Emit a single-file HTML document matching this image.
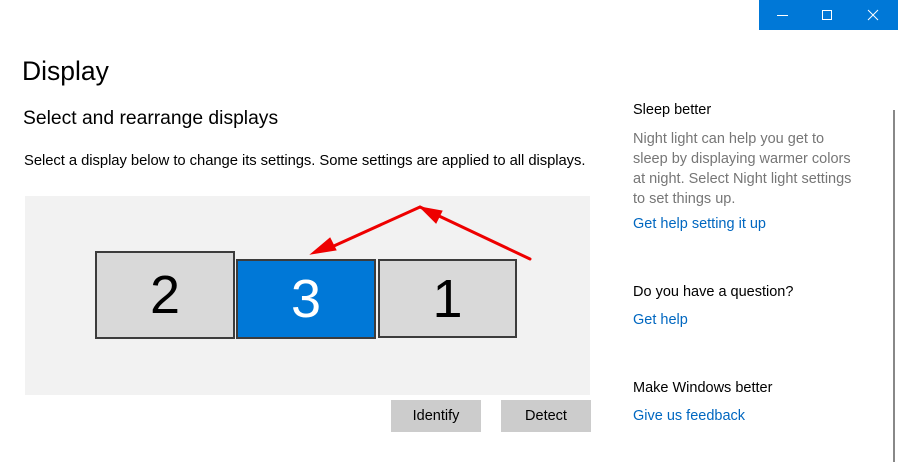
<!DOCTYPE html>
<html><head><meta charset="utf-8"><style>
body{margin:0;width:898px;height:462px;background:#fff;position:relative;overflow:hidden;font-family:"Liberation Sans",sans-serif;color:#000}
.a{position:absolute}
.tb{left:759px;top:0;width:139px;height:30px;background:#0078d7}
.mon{position:absolute;box-sizing:border-box;border:2px solid #3c3c3c;background:#d9d9d9;font-size:54px;font-weight:300;display:flex;align-items:center;justify-content:center}
.btn{position:absolute;top:400px;height:32px;width:90px;background:#cccccc;font-size:14.5px;display:flex;align-items:center;justify-content:center;color:#000}
.side{font-size:14.5px;color:#000}
.gray{color:#767676;font-size:14.5px;line-height:20px}
.link{color:#0067c0;font-size:14.5px}
</style></head><body>
<div class="a tb">
<svg width="139" height="30" class="a" style="left:0;top:0">
<line x1="18" y1="15.5" x2="29" y2="15.5" stroke="#fff" stroke-width="1"/>
<rect x="63.5" y="10.5" width="9" height="9" fill="none" stroke="#fff"/>
<line x1="109" y1="10" x2="119" y2="20" stroke="#fff"/>
<line x1="119" y1="10" x2="109" y2="20" stroke="#fff"/>
</svg></div>
<div class="a" style="left:893px;top:110px;width:2px;height:352px;background:#888"></div>
<div class="a" style="left:22px;top:56px;font-size:26.5px;font-weight:300">Display</div>
<div class="a" style="left:23px;top:108px;font-size:19.3px">Select and rearrange displays</div>
<div class="a" style="left:24px;top:153px;font-size:14.8px;letter-spacing:-0.05px">Select a display below to change its settings. Some settings are applied to all displays.</div>
<div class="a" style="left:25px;top:196px;width:565px;height:199px;background:#f2f2f2"></div>
<div class="mon" style="left:95px;top:251px;width:140px;height:88px">2</div>
<div class="mon" style="left:236px;top:259px;width:140px;height:80px;background:#0078d7;color:#fff">3</div>
<div class="mon" style="left:378px;top:259px;width:139px;height:79px">1</div>
<svg class="a" style="left:0;top:0" width="898" height="462">
<g stroke="#e00" stroke-width="3" fill="#e00" stroke-linecap="round">
<line x1="420" y1="207" x2="325" y2="250"/>
<line x1="420" y1="207" x2="530" y2="259"/>
<polygon points="311,254 330,238 336,250" stroke-width="1"/>
<polygon points="420,207 442,211 436,223" stroke-width="1"/>
</g></svg>
<div class="btn" style="left:391px">Identify</div>
<div class="btn" style="left:501px">Detect</div>
<div class="a side" style="left:633px;top:102px">Sleep better</div>
<div class="a gray" style="left:633px;top:129px;width:250px">Night light can help you get to<br>sleep by displaying warmer colors<br>at night. Select Night light settings<br>to set things up.</div>
<div class="a link" style="left:633px;top:216px">Get help setting it up</div>
<div class="a side" style="left:633px;top:284px">Do you have a question?</div>
<div class="a link" style="left:633px;top:312px">Get help</div>
<div class="a side" style="left:633px;top:380px">Make Windows better</div>
<div class="a link" style="left:633px;top:408px">Give us feedback</div>
</body></html>
